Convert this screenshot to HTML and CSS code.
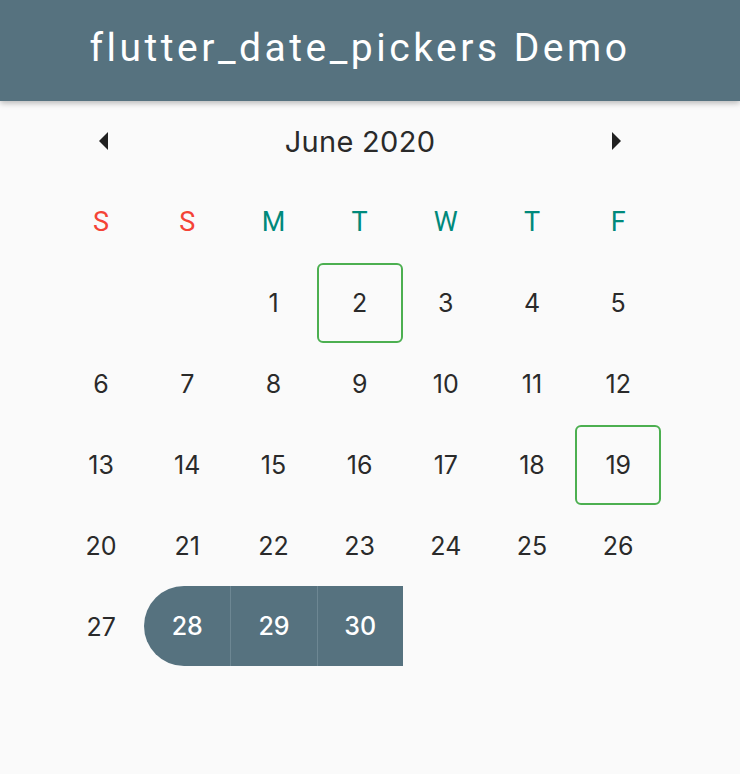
FILE: index.html
```html
<!DOCTYPE html>
<html>
<head>
<meta charset="utf-8">
<link rel="stylesheet" href="styles.css">
</head>
<body>
<header class="appbar"><h1 class="title">flutter_date_pickers Demo</h1></header>
<main class="picker">
  <div class="month-bar">
    <button class="nav" aria-label="previous"><svg width="10" height="18" viewBox="0 0 10 18"><path d="M9 0 L0 9 L9 18 Z" fill="#212121"/></svg></button>
    <div class="month">June 2020</div>
    <button class="nav" aria-label="next"><svg width="10" height="18" viewBox="0 0 10 18"><path d="M1 0 L10 9 L1 18 Z" fill="#212121"/></svg></button>
  </div>
  <div class="grid">
    <div class="wd weekend">S</div><div class="wd weekend">S</div><div class="wd">M</div><div class="wd">T</div><div class="wd">W</div><div class="wd">T</div><div class="wd">F</div>
    <div class="day"></div><div class="day"></div><div class="day">1</div><div class="day marked">2</div><div class="day">3</div><div class="day">4</div><div class="day">5</div>
    <div class="day">6</div><div class="day">7</div><div class="day">8</div><div class="day">9</div><div class="day">10</div><div class="day">11</div><div class="day">12</div>
    <div class="day">13</div><div class="day">14</div><div class="day">15</div><div class="day">16</div><div class="day">17</div><div class="day">18</div><div class="day marked">19</div>
    <div class="day">20</div><div class="day">21</div><div class="day">22</div><div class="day">23</div><div class="day">24</div><div class="day">25</div><div class="day">26</div>
    <div class="day">27</div><div class="day sel sel-start">28</div><div class="day sel">29</div><div class="day sel sel-end">30</div>
  </div>
</main>
</body>
</html>
```
FILE: styles.css
```css
* { box-sizing: border-box; }
html, body { margin: 0; padding: 0; }
body {
  background: #fafafa;
  width: 740px;
  height: 774px;
  overflow: hidden;
  font-family: Inter, Roboto, "Liberation Sans", sans-serif;
  color: #2a2a2a;
}
.appbar {
  height: 101px;
  background: #56727f;
  display: flex;
  align-items: center;
  justify-content: center;
  padding-bottom: 4px;
  box-shadow: 0 2px 6px rgba(0,0,0,0.28);
  position: relative;
  z-index: 1;
}
.title {
  margin: 0;
  padding-right: 20px;
  font-family: Roboto, "Liberation Sans", sans-serif;
  font-weight: 400;
  font-size: 39px;
  letter-spacing: 3.5px;
  color: #fff;
  line-height: 1;
}
.picker {
  padding-left: 58px;
  width: 662px;
}
.month-bar {
  height: 80px;
  display: flex;
  align-items: center;
  justify-content: space-between;
  padding: 0 38px 0 38px;
}
.nav {
  border: 0;
  background: none;
  padding: 0;
  width: 16px;
  height: 24px;
  display: flex;
  align-items: center;
  justify-content: center;
}
.month {
  font-size: 29px;
  letter-spacing: 0.3px;
  color: #2a2a2a;
}
.grid {
  display: grid;
  grid-template-columns: repeat(7, 86.2px);
  grid-auto-rows: 81px;
}
.wd {
  display: flex;
  align-items: center;
  justify-content: center;
  font-family: Roboto, "Liberation Sans", sans-serif;
  font-size: 27px;
  color: #00897b;
}
.wd.weekend { color: #f44336; }
.day {
  display: flex;
  align-items: center;
  justify-content: center;
  font-size: 25px;
  color: #2a2a2a;
}
.day.marked {
  border: 2px solid #4caf50;
  border-radius: 6px;
  margin: 1px 0 0 0;
}
.day.sel {
  background: #56727f;
  color: #fff;
  font-weight: 500;
  border-left: 1px solid #6d8793;
  margin-bottom: 1px;
}
.day.sel-start {
  border-left: 0;
  border-radius: 40px 0 0 40px;
}
```
